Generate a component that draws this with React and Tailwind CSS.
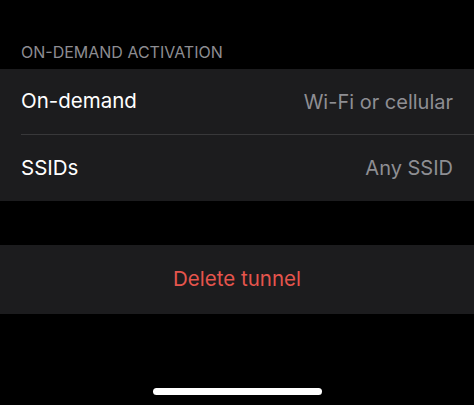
const ROWS = [
  { label: 'On-demand', value: 'Wi-Fi or cellular' },
  { label: 'SSIDs', value: 'Any SSID' },
]

export default function App() {
  return (
    <div className="w-[474px] h-[405px] bg-black flex flex-col overflow-hidden font-['Inter','Liberation_Sans',sans-serif]">
      <p className="pl-[21px] pt-[42px] h-[69px] text-[16px] leading-[20px] text-[#8d8d92] uppercase">
        On-demand activation
      </p>

      <div className="bg-[#1c1c1e]">
        {ROWS.map((r, i) => (
          <div key={r.label} className="pl-[21px]">
            <div
              className={`h-[66px] flex items-center justify-between pr-[21px] ${
                i < ROWS.length - 1 ? 'border-b border-[#38383a]' : ''
              }`}
            >
              <span className="text-[20.5px] text-white">{r.label}</span>
              <span className="text-[20px] text-[#8e8e93]">{r.value}</span>
            </div>
          </div>
        ))}
      </div>

      <div className="h-[44px]" />

      <button className="h-[69px] bg-[#1c1c1e] flex items-center justify-center text-[20.5px] text-[#e5554d]">
        Delete tunnel
      </button>

      <div className="flex-1 flex items-end justify-center pb-[10px]">
        <div className="w-[169px] h-[7px] rounded-full bg-white" />
      </div>
    </div>
  )
}
